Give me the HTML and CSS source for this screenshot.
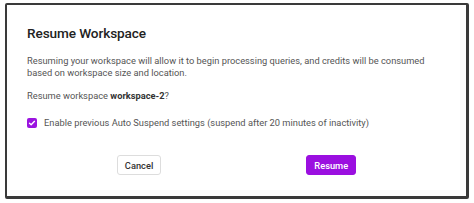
FILE: index.html
```html
<!DOCTYPE html>
<html lang="en">
<head>
    <meta charset="UTF-8">
    <title>Resume Workspace</title>
    <link rel="stylesheet" href="styles.css">
</head>
<body>
    <div class="dialog" role="dialog" aria-labelledby="dialogTitle">
        <h2 class="dialog-title" id="dialogTitle">Resume Workspace</h2>
        <p class="dialog-text">Resuming your workspace will allow it to begin processing queries, and credits will be consumed based on workspace size and location.</p>
        <p class="dialog-text">Resume workspace <strong>workspace-2</strong>?</p>
        <label class="check-row">
            <span class="checkbox">
                <svg viewBox="0 0 12 12" fill="none" stroke="white" stroke-width="1.6" stroke-linecap="round" stroke-linejoin="round">
                    <path d="M3 6.2l2 2 4-4.2"/>
                </svg>
            </span>
            Enable previous Auto Suspend settings (suspend after 20 minutes of inactivity)
        </label>
        <div class="actions">
            <button class="btn btn-cancel">Cancel</button>
            <button class="btn btn-primary">Resume</button>
        </div>
    </div>
</body>
</html>
```

FILE: styles.css
```css
* {
    margin: 0;
    padding: 0;
    box-sizing: border-box;
}

body {
    font-family: Roboto, 'Liberation Sans', sans-serif;
    background: white;
    color: #555;
    padding: 3px 5px 0 5px;
}

.dialog {
    width: 464px;
    height: 196px;
    border: 2px solid #3a3a3a;
    border-bottom-width: 3px;
    border-right-width: 3px;
    border-radius: 2px;
    background: white;
    padding: 19px 20px 0 20px;
}

.dialog-title {
    font-size: 13.6px;
    font-weight: 500;
    letter-spacing: -0.1px;
    color: #222;
    line-height: 18px;
    margin-bottom: 13px;
}

.dialog-text {
    font-size: 9.3px;
    line-height: 12px;
    margin-bottom: 11px;
}

.dialog-text strong {
    color: #333;
    font-weight: 700;
}

.check-row {
    display: flex;
    align-items: center;
    gap: 7px;
    font-size: 9.3px;
    line-height: 12px;
    margin-top: 15px;
}

.checkbox {
    width: 10px;
    height: 10px;
    border-radius: 2px;
    background: #9b14e0;
    display: flex;
    align-items: center;
    justify-content: center;
}

.checkbox svg {
    width: 10px;
    height: 10px;
}

.actions {
    display: flex;
    justify-content: center;
    gap: 145px;
    margin-top: 26px;
}

.btn {
    font-family: Roboto, 'Liberation Sans', sans-serif;
    font-size: 9.3px;
    font-weight: 500;
    height: 20px;
    padding: 0 7px;
    border-radius: 3px;
    cursor: pointer;
}

.btn-cancel {
    background: white;
    color: #333;
    border: 1px solid #ddd;
}

.btn-primary {
    background: #9b0fe0;
    color: white;
    border: 1px solid #9b0fe0;
}
```
